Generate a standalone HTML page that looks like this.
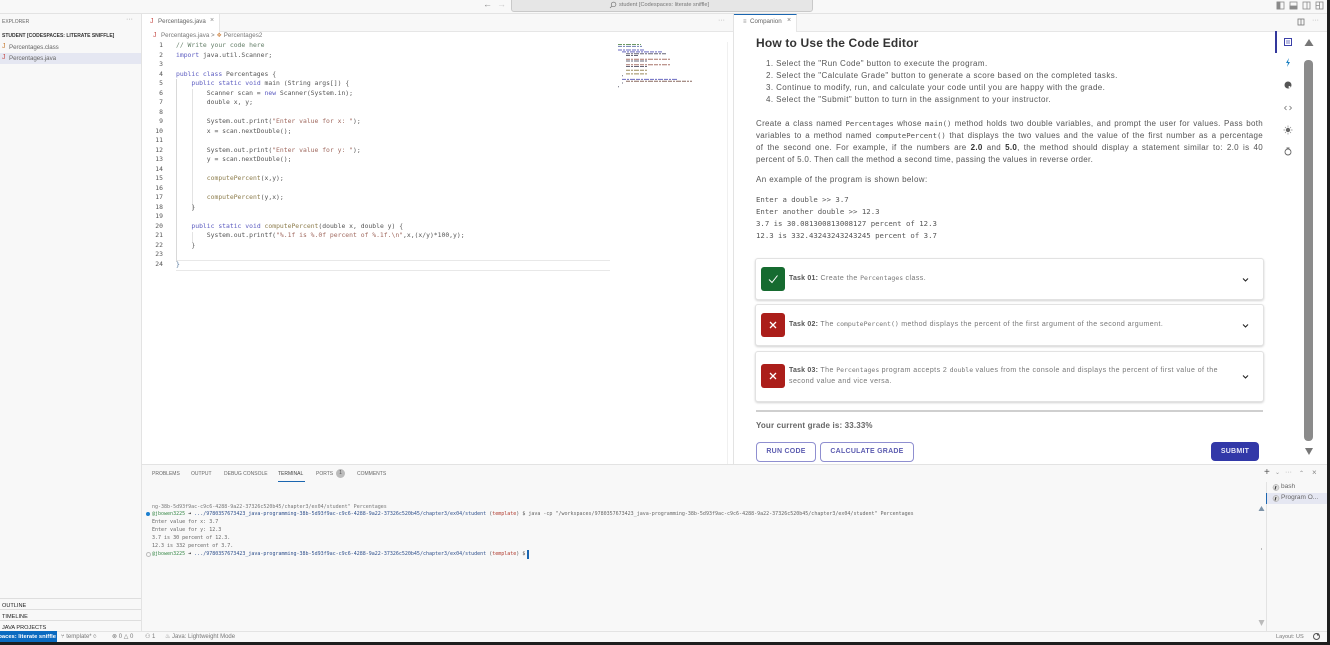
<!DOCTYPE html>
<html lang="en"><head><meta charset="utf-8"><title>Code Editor</title>
<style>
html,body{margin:0;padding:0;width:1330px;height:645px;overflow:hidden;background:#fff}
body{position:relative;font-family:"Liberation Sans",sans-serif;color:#555}
#w{position:absolute;left:0;top:0;width:1330px;height:645px;overflow:hidden;filter:blur(.3px)}
.a{position:absolute;white-space:nowrap}
.b{position:absolute}
pre{margin:0;font-family:"DejaVu Sans Mono",monospace}
#code,#nums{position:absolute;top:41.1px;font-size:6.4px;line-height:9.52px;color:#555}
#code{left:176px}
#nums{left:150px;width:13px;text-align:right;color:#555}
.k{color:#5b5bc0}.s{color:#a0695f}.c{color:#66806a}.f{color:#8d7d4d}.v{color:#4b6f96}
.side{font-size:6.2px;left:5px;color:#444}
.ph{font-size:5px;font-weight:bold;color:#333;left:2px}
.ptab{font-size:5px;top:471px;color:#666;line-height:7px}
.t{font-family:"DejaVu Sans Mono",monospace;font-size:5px;line-height:8px;left:152px;color:#666}
.li{left:766px;font-size:8px;line-height:12px;color:#555;letter-spacing:.4px}
.p{position:absolute;left:756px;width:507px;font-size:8px;line-height:12px;color:#555;letter-spacing:.3px}
.p div{white-space:nowrap;text-align:justify;text-align-last:justify}
.p div:last-child{text-align-last:left}
.m{font-family:"DejaVu Sans Mono",monospace;letter-spacing:0}
.p .m{font-size:7.3px}
.mono{left:756px;font-family:"DejaVu Sans Mono",monospace;font-size:7.33px;line-height:12px;color:#555}
.card{position:absolute;left:755px;width:507px;background:#fff;border:1px solid #e2e2e2;border-radius:3px;box-shadow:0 1px 2px rgba(0,0,0,.18)}
.ic{position:absolute;left:761px;width:24px;height:24px;border-radius:3px}
.tt{position:absolute;left:789px;font-size:7px;line-height:11px;color:#777;letter-spacing:.45px;white-space:nowrap}
.tt .m{font-size:6.5px}
.tt b{color:#555;letter-spacing:.2px}
.btn{position:absolute;top:442px;height:18px;border:1px solid #8f8fd0;border-radius:4px;color:#5c5cb0;font-size:7px;font-weight:bold;line-height:18px;text-align:center;letter-spacing:.25px;background:#fff}
.st{font-size:6px;top:633px;color:#777;line-height:8px}
</style></head><body><div id="w">

<!-- title bar -->
<div class="b" style="left:0;top:0;width:1330px;height:13px;background:#f8f8f8;border-bottom:1px solid #e3e3e3"></div>
<div class="a" style="left:483px;top:0;font-size:9px;line-height:9px;color:#888">←</div>
<div class="a" style="left:497px;top:0;font-size:9px;line-height:9px;color:#ccc">→</div>
<div class="b" style="left:511px;top:-3px;width:300px;height:13px;background:#e6e6e6;border:1px solid #c9c9c9;border-radius:3px"></div>
<svg class="b" style="left:609px;top:1px" width="8" height="8" viewBox="0 0 8 8"><circle cx="4.600" cy="3.400" r="2.300" fill="none" stroke="#777" stroke-width=".7"/><path d="M3 5 1 7" stroke="#777" stroke-width=".7"/></svg>
<div class="a" style="left:619px;top:1px;font-size:5.600px;line-height:8px;color:#777">student [Codespaces: literate sniffle]</div>
<svg class="b" style="left:1276px;top:1px" width="50" height="9" viewBox="0 0 50 9" fill="none" stroke="#8a8a8a" stroke-width=".8">
<rect x="1" y="1" width="7" height="7"/><rect x="1" y="1" width="3" height="7" fill="#8a8a8a"/>
<rect x="14" y="1" width="7" height="7"/><rect x="14" y="5" width="7" height="3" fill="#8a8a8a"/>
<rect x="27" y="1" width="7" height="7"/><path d="M31 1v7"/>
<rect x="40" y="1" width="7" height="7"/><path d="M43.500 1v7M40 4.500h3.500"/></svg>

<!-- sidebar -->
<div class="b" style="left:0;top:14px;width:141px;height:617px;background:#f8f8f8;border-right:1px solid #e3e3e3"></div>
<div class="a" style="left:2px;top:19px;font-size:5px;line-height:7px;color:#666">EXPLORER</div>
<div class="a" style="left:126px;top:16px;font-size:7px;line-height:7px;color:#999">···</div>
<div class="a ph" style="top:33px;line-height:7px">STUDENT [CODESPACES: LITERATE SNIFFLE]</div>
<div class="b" style="left:0;top:53px;width:141px;height:11px;background:#e5e7f2"></div>
<div class="a" style="left:2px;top:43px;font-size:7px;line-height:8px;color:#c9803a">J</div>
<div class="a" style="left:2px;top:54px;font-size:7px;line-height:8px;color:#c75450">J</div>
<div class="a side" style="left:9px;top:44px;line-height:8px;letter-spacing:-.05px;color:#666">Percentages.class</div>
<div class="a side" style="left:9px;top:55px;line-height:8px;letter-spacing:-.05px;color:#666">Percentages.java</div>
<div class="b" style="left:0;top:598px;width:141px;height:1px;background:#dedede"></div>
<div class="b" style="left:0;top:609px;width:141px;height:1px;background:#dedede"></div>
<div class="b" style="left:0;top:620px;width:141px;height:1px;background:#dedede"></div>
<div class="a ph" style="top:602px;font-size:5.600px;line-height:8px;font-weight:normal;color:#222">OUTLINE</div>
<div class="a ph" style="top:613px;font-size:5.600px;line-height:8px;font-weight:normal;color:#222">TIMELINE</div>
<div class="a ph" style="top:624px;font-size:5.600px;line-height:8px;font-weight:normal;color:#222">JAVA PROJECTS</div>

<!-- tab row -->
<div class="b" style="left:142px;top:14px;width:1185px;height:17px;background:#f8f8f8;border-bottom:1px solid #e6e6e6"></div>
<div class="b" style="left:142px;top:14px;width:77px;height:18px;background:#fff;border-right:1px solid #e6e6e6"></div>
<div class="a" style="left:150px;top:17px;font-size:7px;line-height:9px;color:#c75450">J</div>
<div class="a" style="left:158px;top:18px;font-size:6.200px;line-height:8px;color:#666">Percentages.java</div>
<div class="a" style="left:210px;top:17px;font-size:7px;line-height:8px;color:#888">×</div>
<div class="a" style="left:718px;top:17px;font-size:7px;line-height:7px;color:#aaa">···</div>

<!-- editor -->
<div class="a" style="left:153px;top:32px;font-size:7px;line-height:8px;color:#c75450">J</div>
<div class="a" style="left:161px;top:32px;font-size:6.200px;line-height:8px;color:#777;letter-spacing:.03px">Percentages.java &gt; <span style="color:#d08a4c">❖</span> Percentages2</div>
<pre id="nums">1
2
3
4
5
6
7
8
9
10
11
12
13
14
15
16
17
18
19
20
21
22
23
24</pre>
<div class="b" style="left:176px;top:260px;width:434px;height:9px;border-top:1px solid #e8e8e8;border-bottom:1px solid #e8e8e8"></div>
<div class="b" style="left:176px;top:79px;width:1px;height:183px;background:#d9d9d9"></div>
<div class="b" style="left:192px;top:89px;width:1px;height:121px;background:#e3e3e3"></div>
<div class="b" style="left:192px;top:232px;width:1px;height:10px;background:#e3e3e3"></div>
<pre id="code"><span class="c">// Write your code here</span>
<span class="k">import</span> java.util.Scanner;

<span class="k">public class</span> Percentages {
    <span class="k">public static</span> <span class="k">void</span> main (String args[]) {
        Scanner scan = <span class="k">new</span> Scanner(System.in);
        double x, y;

        System.out.print(<span class="s">"Enter value for x: "</span>);
        x = scan.nextDouble();

        System.out.print(<span class="s">"Enter value for y: "</span>);
        y = scan.nextDouble();

        <span class="f">computePercent</span>(x,y);

        <span class="f">computePercent</span>(y,x);
    }

    <span class="k">public static</span> <span class="k">void</span> <span class="f">computePercent</span>(double x, double y) {
        System.out.printf(<span class="s">"%.1f is %.0f percent of %.1f.\n"</span>,x,(x/y)*100,y);
    }

<span class="v">}</span></pre>

<!-- minimap -->
<svg class="b" style="left:618px;top:43px" width="76" height="48" viewBox="0 0 76 48" stroke-width="1" stroke-dasharray="4 1 2 1 5 1">
<path d="M0 1.500h23" stroke="#6d9a65"/>
<path d="M0 3.400h24" stroke="#6f7fb0"/>
<path d="M0 7h26" stroke="#6a6ac0"/>
<path d="M4 8.900h40" stroke="#6a6ac0"/>
<path d="M8 10.700h40" stroke="#667"/>
<path d="M8 12.500h12" stroke="#667"/>
<path d="M8 16.200h44" stroke="#a8756a"/>
<path d="M8 18h22" stroke="#667"/>
<path d="M8 21.700h44" stroke="#a8756a"/>
<path d="M8 23.500h22" stroke="#667"/>
<path d="M8 27.200h21" stroke="#9a8b5c"/>
<path d="M8 30.900h21" stroke="#9a8b5c"/>
<path d="M4 32.700h1" stroke="#667"/>
<path d="M4 36.400h55" stroke="#6a6ac0"/>
<path d="M8 38.200h66" stroke="#8a6a60"/>
<path d="M4 40h1" stroke="#667"/>
<path d="M0 43.700h1" stroke="#667"/>
</svg>
<div class="b" style="left:727px;top:42px;width:1px;height:422px;background:#f0f0f0"></div>
<div class="b" style="left:733px;top:14px;width:1px;height:450px;background:#e3e3e3"></div>

<!-- companion -->
<div class="b" style="left:734px;top:14px;width:63px;height:18px;background:#fff;border-top:1px solid #1b66b0;border-right:1px solid #e6e6e6;box-sizing:border-box"></div>
<div class="a" style="left:743px;top:18px;font-size:6px;line-height:8px;color:#888">≡</div>
<div class="a" style="left:750px;top:18px;font-size:6.200px;line-height:8px;color:#666">Companion</div>
<div class="a" style="left:787px;top:17px;font-size:7px;line-height:8px;color:#777">×</div>
<svg class="b" style="left:1297px;top:18px" width="8" height="8" viewBox="0 0 8 8" fill="none" stroke="#777" stroke-width=".8"><rect x="1" y="1" width="6" height="6"/><path d="M4 1v6"/></svg>
<div class="a" style="left:1312px;top:17px;font-size:7px;line-height:7px;color:#aaa">···</div>

<div class="a" style="left:756px;top:34.500px;font-size:12px;line-height:16px;font-weight:bold;color:#333;letter-spacing:.17px">How to Use the Code Editor</div>
<div class="a li" style="top:58px">1. Select the "Run Code" button to execute the program.</div>
<div class="a li" style="top:70px">2. Select the "Calculate Grade" button to generate a score based on the completed tasks.</div>
<div class="a li" style="top:82px">3. Continue to modify, run, and calculate your code until you are happy with the grade.</div>
<div class="a li" style="top:94px">4. Select the "Submit" button to turn in the assignment to your instructor.</div>

<div class="p" style="top:118px">
<div>Create a class named <span class="m">Percentages</span> whose <span class="m">main()</span> method holds two double variables, and prompt the user for values. Pass both</div>
<div>variables to a method named <span class="m">computePercent()</span> that displays the two values and the value of the first number as a percentage</div>
<div>of the second one. For example, if the numbers are <b style="color:#333">2.0</b> and <b style="color:#333">5.0</b>, the method should display a statement similar to: 2.0 is 40</div>
<div>percent of 5.0. Then call the method a second time, passing the values in reverse order.</div>
</div>
<div class="a li" style="left:756px;top:174px">An example of the program is shown below:</div>
<div class="a mono" style="top:193.500px">Enter a double &gt;&gt; 3.7</div>
<div class="a mono" style="top:205.500px">Enter another double &gt;&gt; 12.3</div>
<div class="a mono" style="top:217.500px">3.7 is 30.081300813008127 percent of 12.3</div>
<div class="a mono" style="top:229.500px">12.3 is 332.43243243243245 percent of 3.7</div>

<div class="card" style="top:258px;height:40px"></div>
<div class="card" style="top:304px;height:40px"></div>
<div class="card" style="top:351px;height:49px"></div>
<div class="ic" style="top:267px;background:#166b30"><svg width="24" height="24" viewBox="0 0 24 24"><path d="M8 12.500l3 3 5.500-7" fill="none" stroke="#fff" stroke-width="1"/></svg></div>
<div class="ic" style="top:313px;background:#ab1e1a"><svg width="24" height="24" viewBox="0 0 24 24"><path d="M9 9l6 6M15 9l-6 6" fill="none" stroke="#fff" stroke-width="1.300"/></svg></div>
<div class="ic" style="top:364px;background:#ab1e1a"><svg width="24" height="24" viewBox="0 0 24 24"><path d="M9 9l6 6M15 9l-6 6" fill="none" stroke="#fff" stroke-width="1.300"/></svg></div>
<div class="tt" style="top:273px"><b>Task 01:</b> Create the <span class="m">Percentages</span> class.</div>
<div class="tt" style="top:319px"><b>Task 02:</b> The <span class="m">computePercent()</span> method displays the percent of the first argument of the second argument.</div>
<div class="tt" style="top:365px"><b>Task 03:</b> The <span class="m">Percentages</span> program accepts 2 <span class="m">double</span> values from the console and displays the percent of first value of the<br>second value and vice versa.</div>
<svg class="b" style="left:1242px;top:277px" width="7" height="6" viewBox="0 0 7 6"><path d="M1 1.500 3.500 4 6 1.500" fill="none" stroke="#222" stroke-width="1.100"/></svg>
<svg class="b" style="left:1242px;top:323px" width="7" height="6" viewBox="0 0 7 6"><path d="M1 1.500 3.500 4 6 1.500" fill="none" stroke="#222" stroke-width="1.100"/></svg>
<svg class="b" style="left:1242px;top:374px" width="7" height="6" viewBox="0 0 7 6"><path d="M1 1.500 3.500 4 6 1.500" fill="none" stroke="#222" stroke-width="1.100"/></svg>
<div class="b" style="left:756px;top:410px;width:507px;height:2px;background:#cfcfcf"></div>
<div class="a" style="left:756px;top:420px;font-size:8px;line-height:12px;font-weight:bold;color:#666;letter-spacing:.15px">Your current grade is: 33.33%</div>
<div class="btn" style="left:756px;width:58px">RUN CODE</div>
<div class="btn" style="left:820px;width:92px">CALCULATE GRADE</div>
<div class="btn" style="left:1211px;width:48px;height:19px;border:0;background:#3238a8;color:#e8e8f8;line-height:19px">SUBMIT</div>

<!-- rail -->
<div class="b" style="left:1275px;top:31px;width:2px;height:22px;background:#33389c"></div>
<svg class="b" style="left:1283px;top:37px" width="10" height="120" viewBox="0 0 10 120">
<rect x="1.500" y="1.500" width="7" height="7" fill="none" stroke="#3b40a8"/><path d="M4 3v4M6 3v4" stroke="#3b40a8" stroke-width=".7"/>
<path d="M6 21 3 26h2l-1 4 3-5H5z" fill="#1a7fc0"/>
<circle cx="5" cy="48" r="3.500" fill="#555"/><circle cx="6.500" cy="50" r="1" fill="#fff"/>
<path d="M3.500 69 1.500 71l2 2M6.500 69l2 2-2 2" fill="none" stroke="#666" stroke-width=".7"/>
<circle cx="5" cy="93" r="2.200" fill="#666"/><path d="M5 88.500v1.500M5 96v1.500M.5 93H2M8 93h1.500M2 90l1 1M7 95l1 1M8 90l-1 1M3 95l-1 1" stroke="#888" stroke-width=".7"/>
<circle cx="5" cy="115" r="3" fill="none" stroke="#666" stroke-width=".9"/><path d="M3.500 111h3" stroke="#666"/>
</svg>
<svg class="b" style="left:1303px;top:38px" width="12" height="420" viewBox="0 0 12 420">
<path d="M1.500 8 6 1l4.500 7z" fill="#777"/><path d="M2 410h8l-4 7z" fill="#777"/></svg>
<div class="b" style="left:1304px;top:60px;width:9px;height:381px;background:#8b8b8b;border-radius:4px"></div>

<!-- panel -->
<div class="b" style="left:142px;top:464px;width:1185px;height:167px;background:#f8f8f8;border-top:1px solid #e3e3e3;box-sizing:border-box"></div>
<div class="a ptab" style="left:152px">PROBLEMS</div>
<div class="a ptab" style="left:191px">OUTPUT</div>
<div class="a ptab" style="left:224px">DEBUG CONSOLE</div>
<div class="a ptab" style="left:278px;color:#444">TERMINAL</div>
<div class="b" style="left:278px;top:481px;width:27px;height:1px;background:#1b66b0"></div>
<div class="a ptab" style="left:316px">PORTS</div>
<div class="b" style="left:336px;top:469px;width:9px;height:9px;border-radius:50%;background:#bbb;color:#555;font-size:5px;line-height:9px;text-align:center">1</div>
<div class="a ptab" style="left:357px">COMMENTS</div>

<div class="a t" style="top:503px;color:#777">ng-38b-5d93f9ac-c9c6-4288-9a22-37326c520b45/chapter3/ex04/student" Percentages</div>
<div class="b" style="left:146px;top:512px;width:4px;height:4px;border-radius:50%;background:#1b7fd0"></div>
<div class="a t" style="top:510px"><span style="color:#3a8a4a">@jbowen3225</span> <span style="color:#222">➜</span> <span style="color:#2e4f8c">.../9780357673423_java-programming-38b-5d93f9ac-c9c6-4288-9a22-37326c520b45/chapter3/ex04/student</span> <span style="color:#555">(<span style="color:#b03a2e">template</span>) $</span> java -cp "/workspaces/9780357673423_java-programming-38b-5d93f9ac-c9c6-4288-9a22-37326c520b45/chapter3/ex04/student" Percentages</div>
<div class="a t" style="top:518px">Enter value for x: 3.7</div>
<div class="a t" style="top:526px">Enter value for y: 12.3</div>
<div class="a t" style="top:534px">3.7 is 30 percent of 12.3.</div>
<div class="a t" style="top:542px">12.3 is 332 percent of 3.7.</div>
<div class="b" style="left:146px;top:552px;width:3px;height:3px;border-radius:50%;border:.5px solid #bbb"></div>
<div class="a t" style="top:550px"><span style="color:#3a8a4a">@jbowen3225</span> <span style="color:#222">➜</span> <span style="color:#2e4f8c">.../9780357673423_java-programming-38b-5d93f9ac-c9c6-4288-9a22-37326c520b45/chapter3/ex04/student</span> <span style="color:#555">(<span style="color:#b03a2e">template</span>) $</span></div>
<div class="b" style="left:527px;top:550px;width:2px;height:9px;background:#1b66b0"></div>

<!-- terminal list -->
<div class="b" style="left:1266px;top:482px;width:1px;height:149px;background:#e3e3e3"></div>
<div class="b" style="left:1267px;top:493px;width:60px;height:11px;background:#e5e7f2"></div>
<div class="b" style="left:1266px;top:493px;width:1px;height:11px;background:#1b66b0"></div>
<div class="a" style="left:1264px;top:468px;font-size:10px;line-height:10px;color:#555">+</div>
<div class="a" style="left:1275px;top:470px;font-size:6px;line-height:7px;color:#999">⌄</div>
<div class="a" style="left:1285px;top:469px;font-size:7px;line-height:7px;color:#aaa">···</div>
<div class="a" style="left:1299px;top:471px;font-size:6px;line-height:7px;color:#888">⌃</div>
<div class="a" style="left:1312px;top:468px;font-size:8px;line-height:9px;color:#888">×</div>
<svg class="b" style="left:1272px;top:484px" width="8" height="18" viewBox="0 0 8 18"><circle cx="4" cy="3.500" r="3" fill="#ddd" stroke="#999" stroke-width=".5"/><path d="M4 2 3 5.500" stroke="#333"/><circle cx="4" cy="14.500" r="3" fill="#ddd" stroke="#999" stroke-width=".5"/><path d="M4 13l-1 3.500" stroke="#333"/></svg>
<div class="a" style="left:1281px;top:483px;font-size:6.500px;line-height:8px;color:#666">bash</div>
<div class="a" style="left:1281px;top:494px;font-size:6.500px;line-height:8px;color:#666">Program O...</div>
<svg class="b" style="left:1258px;top:505px" width="7" height="122" viewBox="0 0 7 122"><path d="M.500 6 3.500 1l3 5z" fill="#7d93a8"/><path d="M.500 115h6l-3 6z" fill="#bbb"/><rect x="3" y="43" width="1" height="2" fill="#bbb"/></svg>

<!-- status bar -->
<div class="b" style="left:0;top:631px;width:1327px;height:11px;background:#f8f8f8;border-top:1px solid #e3e3e3;box-sizing:border-box"></div>
<div class="b" style="left:0;top:631px;width:57px;height:11px;background:#0a6ac0;overflow:hidden"><div class="a" style="right:1px;top:2px;font-size:5.800px;line-height:8px;font-weight:bold;color:#fff">Codespaces: literate sniffle</div></div>
<div class="a st" style="left:61px">⑂ template* ⟳</div>
<div class="a st" style="left:112px">⊗ 0 △ 0</div>
<div class="a st" style="left:145px">⚇ 1</div>
<div class="a st" style="left:165px">♨ Java: Lightweight Mode</div>
<div class="a st" style="left:1276px;font-size:5.600px">Layout: US</div>
<svg class="b" style="left:1312px;top:632px" width="9" height="9" viewBox="0 0 9 9"><circle cx="4.500" cy="4.500" r="3" fill="none" stroke="#555"/><circle cx="6" cy="2.500" r="1.200" fill="#555"/></svg>
<div class="b" style="left:0;top:642px;width:1330px;height:3px;background:#1e1e1e"></div>
<div class="b" style="left:1327px;top:0;width:3px;height:645px;background:#1e1e1e"></div>
</div></body></html>
